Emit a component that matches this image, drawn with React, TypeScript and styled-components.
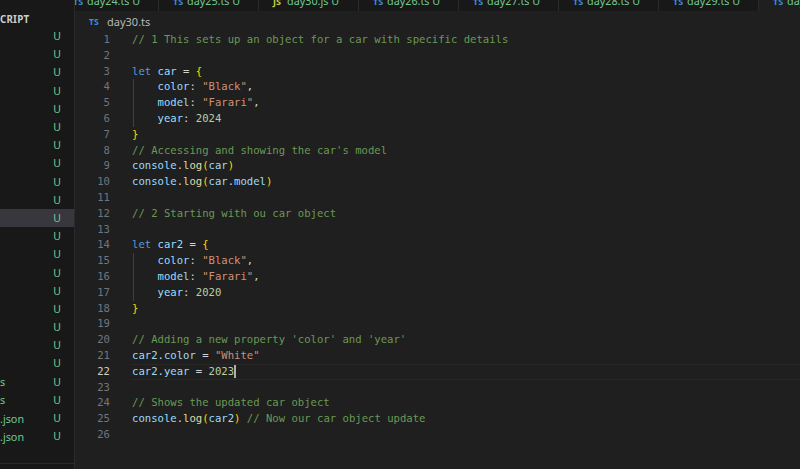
import { FunctionComponent } from 'react';
import styled, { createGlobalStyle } from 'styled-components';

type Kind = 'cm' | 'kw' | 'var' | 'str' | 'num' | 'br' | 'fn' | 'op';
type Token = [string, Kind];

const colors: Record<Kind, string> = {
  cm: '#6a9955',
  kw: '#569cd6',
  var: '#9cdcfe',
  str: '#ce9178',
  num: '#b5cea8',
  br: '#ffd700',
  fn: '#dcdcaa',
  op: '#d4d4d4',
};

const objectLines = (name: string, year: string): Token[][] => [
  [['let', 'kw'], [' ', 'op'], [name, 'var'], [' = ', 'op'], ['{', 'br']],
  [['    ', 'op'], ['color', 'var'], [': ', 'op'], ['"Black"', 'str'], [',', 'op']],
  [['    ', 'op'], ['model', 'var'], [': ', 'op'], ['"Farari"', 'str'], [',', 'op']],
  [['    ', 'op'], ['year', 'var'], [': ', 'op'], [year, 'num']],
  [['}', 'br']],
];

const code: Token[][] = [
  [['// 1 This sets up an object for a car with specific details', 'cm']],
  [],
  ...objectLines('car', '2024'),
  [["// Accessing and showing the car's model", 'cm']],
  [['console', 'var'], ['.', 'op'], ['log', 'fn'], ['(', 'br'], ['car', 'var'], [')', 'br']],
  [['console', 'var'], ['.', 'op'], ['log', 'fn'], ['(', 'br'], ['car', 'var'], ['.', 'op'], ['model', 'var'], [')', 'br']],
  [],
  [['// 2 Starting with ou car object', 'cm']],
  [],
  ...objectLines('car2', '2020'),
  [],
  [["// Adding a new property 'color' and 'year'", 'cm']],
  [['car2', 'var'], ['.', 'op'], ['color', 'var'], [' = ', 'op'], ['"White"', 'str']],
  [['car2', 'var'], ['.', 'op'], ['year', 'var'], [' = ', 'op'], ['2023', 'num']],
  [],
  [['// Shows the updated car object', 'cm']],
  [['console', 'var'], ['.', 'op'], ['log', 'fn'], ['(', 'br'], ['car2', 'var'], [')', 'br'], [' // Now our car object update', 'cm']],
  [],
];

const CURRENT_LINE = 22;
const GUIDED = [4, 5, 6, 15, 16, 17];

const tabs = [
  { name: 'day24.ts', js: false },
  { name: 'day25.ts', js: false },
  { name: 'day30.js', js: true },
  { name: 'day26.ts', js: false },
  { name: 'day27.ts', js: false },
  { name: 'day28.ts', js: false },
  { name: 'day29.ts', js: false },
  { name: 'day30.ts', js: false },
];

const files = Array.from({ length: 23 }, (_, i) => {
  const names: Record<number, string> = { 19: 's', 20: 's', 21: '.json', 22: '.json' };
  return { name: names[i] ?? '', selected: i === 10 };
});

export default function App() {
  return (
    <>
      <GlobalStyle />
      <Root>
        <Sidebar>
          <SectionHeader>CRIPT</SectionHeader>
          <FileList>
            {files.map((f, i) => (
              <FileRow key={i} $selected={f.selected}>
                <FileName>{f.name}</FileName>
                <Badge>U</Badge>
              </FileRow>
            ))}
          </FileList>
          <SidebarFooter />
        </Sidebar>
        <Editor>
          <TabBar>
            <TabStrip>
              {tabs.map((t, i) => (
                <Tab key={i} $active={i === tabs.length - 1}>
                  <TabIcon $js={t.js}>{t.js ? 'JS' : 'TS'}</TabIcon>
                  <TabLabel>
                    {t.name} U
                  </TabLabel>
                </Tab>
              ))}
            </TabStrip>
          </TabBar>
          <Breadcrumb>
            <TsIcon>TS</TsIcon>
            <span>day30.ts</span>
          </Breadcrumb>
          <CodeArea>
            {code.map((tokens, i) => {
              const n = i + 1;
              return <Line key={n} n={n} tokens={tokens} />;
            })}
          </CodeArea>
        </Editor>
      </Root>
    </>
  );
}

const Line: FunctionComponent<{ n: number; tokens: Token[] }> = ({ n, tokens }) => (
  <Row>
    <LineNumber $current={n === CURRENT_LINE}>{n}</LineNumber>
    <LineContent $current={n === CURRENT_LINE}>
      {GUIDED.includes(n) && <IndentGuide />}
      {tokens.map(([text, kind], j) => (
        <Tok key={j} $kind={kind}>
          {text}
        </Tok>
      ))}
      {n === CURRENT_LINE && <Cursor />}
    </LineContent>
  </Row>
);

const GlobalStyle = createGlobalStyle`
  html, body {
    margin: 0;
    padding: 0;
    background: #1f1f1f;
    overflow: hidden;
  }
`;

const Root = styled.div`
  display: flex;
  width: 800px;
  height: 469px;
  overflow: hidden;
  font-family: 'Noto Sans', 'Open Sans', sans-serif;
`;

const Sidebar = styled.div`
  width: 74px;
  flex-shrink: 0;
  display: flex;
  flex-direction: column;
  background: #181818;
  border-right: 1px solid #2b2b2b;
`;

const SectionHeader = styled.div`
  height: 16px;
  margin-top: 12px;
  font-size: 9.8px;
  font-weight: 700;
  line-height: 16px;
  color: #cccccc;
  letter-spacing: 0.2px;
  white-space: nowrap;
  margin-bottom: -1px;
`;

const FileList = styled.div`
  flex: 1;
  display: flex;
  flex-direction: column;
`;

const FileRow = styled.div<{ $selected: boolean }>`
  height: 18.2px;
  display: flex;
  align-items: center;
  justify-content: space-between;
  padding-right: 13px;
  background: ${(p) => (p.$selected ? '#37373d' : 'transparent')};
  font-size: 10.8px;
  color: #73c991;
`;

const FileName = styled.span`
  white-space: nowrap;
`;

const Badge = styled.span`
  font-size: 10.5px;
`;

const SidebarFooter = styled.div`
  height: 5px;
  border-top: 1px solid #2b2b2b;
`;

const Editor = styled.div`
  flex: 1;
  display: flex;
  flex-direction: column;
  background: #1f1f1f;
  min-width: 0;
`;

const TabBar = styled.div`
  height: 11px;
  background: #181818;
  overflow: hidden;
  flex-shrink: 0;
`;

const TabStrip = styled.div`
  display: flex;
  margin-left: -16px;
  height: 100%;
`;

const Tab = styled.div<{ $active: boolean }>`
  width: 100px;
  flex-shrink: 0;
  box-sizing: border-box;
  height: 11px;
  display: flex;
  align-items: flex-end;
  padding: 0 0 4px 14px;
  gap: 4px;
  background: ${(p) => (p.$active ? '#1f1f1f' : '#181818')};
  border-right: 1px solid #2b2b2b;
  white-space: nowrap;
`;

const TabIcon = styled.span<{ $js: boolean }>`
  font-size: 9px;
  font-weight: 700;
  line-height: 11px;
  width: 10px;
  color: ${(p) => (p.$js ? '#cbcb41' : '#3c8ddb')};
`;

const TabLabel = styled.span`
  font-size: 10.8px;
  line-height: 13px;
  color: #73c991;
`;

const Breadcrumb = styled.div`
  height: 20px;
  display: flex;
  align-items: center;
  gap: 5px;
  padding-left: 14px;
  font-size: 11px;
  color: #b8b8b8;
  flex-shrink: 0;
`;

const TsIcon = styled.span`
  font-size: 8.5px;
  font-weight: 700;
  color: #3c8ddb;
  width: 13px;
`;

const CodeArea = styled.div`
  display: flex;
  flex-direction: column;
  padding-top: 1px;
  font-family: 'DejaVu Sans Mono', 'Liberation Mono', monospace;
  font-size: 10.6px;
`;

const Row = styled.div`
  display: flex;
  height: 15.8px;
  line-height: 15.8px;
`;

const LineNumber = styled.div<{ $current: boolean }>`
  width: 35px;
  text-align: right;
  flex-shrink: 0;
  color: ${(p) => (p.$current ? '#cccccc' : '#6e7681')};
`;

const LineContent = styled.div<{ $current: boolean }>`
  position: relative;
  flex: 1;
  margin-left: 22px;
  white-space: pre;
  box-sizing: border-box;
  border-top: 1px solid ${(p) => (p.$current ? '#282828' : 'transparent')};
  border-bottom: 1px solid ${(p) => (p.$current ? '#282828' : 'transparent')};
  line-height: 13.8px;
`;

const IndentGuide = styled.span`
  position: absolute;
  left: 1px;
  top: -1px;
  bottom: -1px;
  width: 1px;
  background: #404040;
`;

const Tok = styled.span<{ $kind: Kind }>`
  color: ${(p) => colors[p.$kind]};
`;

const Cursor = styled.span`
  display: inline-block;
  width: 1.5px;
  height: 13px;
  vertical-align: top;
  background: #aeafad;
`;
